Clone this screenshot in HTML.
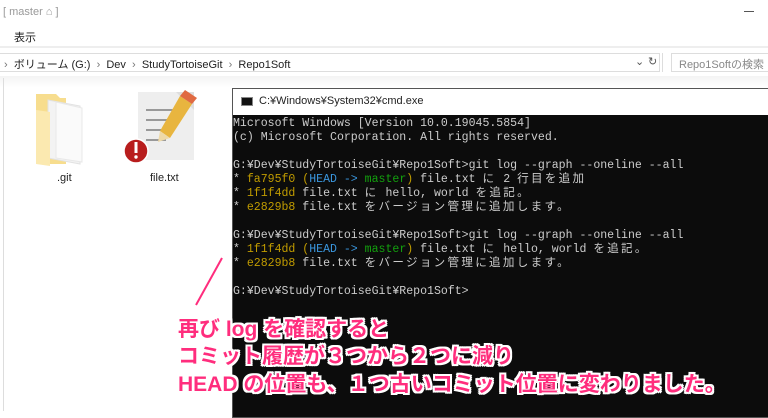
<!DOCTYPE html>
<html><head><meta charset="utf-8"><style>
*{margin:0;padding:0;box-sizing:border-box}
body{width:768px;height:411px;overflow:hidden;background:#fff;position:relative;font-family:"Liberation Sans","Noto Sans CJK JP",sans-serif;}
.abs{position:absolute}
.ui{font-size:11px;color:#222;white-space:nowrap}
#cmd{left:232px;top:88px;width:540px;height:330px;border:1px solid #555;border-right:none;background:#0c0c0c}
#tb{height:26px;background:#fff;position:relative}
#term{position:absolute;left:0;top:28px;font-family:"Liberation Mono","Noto Sans CJK JP",monospace;font-size:11.55px;line-height:14px;color:#ccc;white-space:pre}
.j{letter-spacing:2.3px}
.y{color:#c19c00}.c{color:#3a96dd}.g{color:#13a10e}
.ann{font-family:"Liberation Sans","Noto Sans CJK JP",sans-serif;font-weight:bold;font-size:21px;line-height:24px;color:#ff2d7d;white-space:nowrap;text-shadow:-2px -2px 0 #fff,2px -2px 0 #fff,-2px 2px 0 #fff,2px 2px 0 #fff,0 2px 0 #fff,0 -2px 0 #fff,2px 0 0 #fff,-2px 0 0 #fff}
</style></head><body>
<div class="abs ui" style="left:3px;top:6px;color:#999;font-size:11px">[ master ⌂ ]</div>
<div class="abs" style="left:744px;top:11px;width:10px;height:1px;background:#555"></div>
<div class="abs ui" style="left:14px;top:29px">表示</div>
<div class="abs" style="left:0;top:46px;width:768px;height:2px;background:#eee"></div>
<div class="abs" style="left:0;top:53px;width:660px;height:19px;border:1px solid #ddd;border-left:none"></div>
<div class="abs ui" style="left:4px;top:56px;font-size:11px"><span style="color:#777">›</span>&nbsp; ボリューム (G:) &nbsp;<span style="color:#777">›</span>&nbsp; Dev &nbsp;<span style="color:#777">›</span>&nbsp; StudyTortoiseGit &nbsp;<span style="color:#777">›</span>&nbsp; Repo1Soft</div>
<div class="abs ui" style="left:635px;top:55px;color:#555">⌄</div>
<div class="abs ui" style="left:648px;top:55px;color:#555">↻</div>
<div class="abs" style="left:662px;top:53px;width:1px;height:19px;background:#ddd"></div>
<div class="abs" style="left:671px;top:53px;width:100px;height:19px;border:1px solid #ddd"></div>
<div class="abs ui" style="left:679px;top:56px;color:#888">Repo1Softの検索</div>
<div class="abs" style="left:0;top:76px;width:768px;height:12px;background:linear-gradient(#f3f3f3,#fff)"></div>
<div class="abs" style="left:3px;top:78px;width:1px;height:333px;background:#ddd"></div>
<svg class="abs" style="left:34px;top:92px" width="60" height="76">
<path d="M2 2h20l4 4h6v66H2z" fill="#f7dd8e"/>
<path d="M14 8l32 6v58l-32-6z" fill="#f3f3f3" stroke="#e2e2e2"/>
<path d="M22 10l26 6v54l-26-4z" fill="#fafafa" stroke="#e8e8e8"/>
<path d="M2 18l14 2v54l-14-2z" fill="#fbe9b0"/>
</svg>
<div class="abs ui" style="left:57px;top:172px">.git</div>
<svg class="abs" style="left:122px;top:88px" width="86" height="76">
<rect x="16" y="4" width="56" height="68" fill="#eee"/>
<path d="M16 4l38 0 18 18v-18z" fill="#ddd"/>
<g stroke="#999" stroke-width="2"><line x1="24" y1="22" x2="54" y2="22"/><line x1="24" y1="32" x2="54" y2="32"/><line x1="24" y1="42" x2="50" y2="42"/><line x1="24" y1="52" x2="44" y2="52"/></g>
<path d="M58 8l12 8-22 34-10-7z" fill="#e8b53f"/>
<path d="M58 8l5-6 12 8-5 6z" fill="#e06a42"/>
<path d="M38 43l10 7-12 4z" fill="#eed9a8"/>
<circle cx="14" cy="63" r="12" fill="#b81d1d" stroke="#fff" stroke-width="1.5"/>
<rect x="12.5" y="54" width="3" height="11" fill="#fff"/><circle cx="14" cy="69" r="1.7" fill="#fff"/>
</svg>
<div class="abs ui" style="left:150px;top:172px">file.txt</div>
<div id="cmd" class="abs">
<div id="tb"><div class="abs" style="left:8px;top:8px;width:12px;height:9px;background:#111;border:1px solid #888"></div><div class="abs ui" style="left:26px;top:6px;font-size:11px">C:¥Windows¥System32¥cmd.exe</div></div>
<div id="term">Microsoft Windows [Version 10.0.19045.5854]
(c) Microsoft Corporation. All rights reserved.

G:¥Dev¥StudyTortoiseGit¥Repo1Soft&gt;git log --graph --oneline --all
* <span class="y">fa795f0 (</span><span class="c">HEAD -&gt; </span><span class="g">master</span><span class="y">)</span> file.txt <span class="j">に</span> 2 <span class="j">行目を追加</span>
* <span class="y">1f1f4dd</span> file.txt <span class="j">に</span> hello, world <span class="j">を追記。</span>
* <span class="y">e2829b8</span> file.txt <span class="j">をバージョン管理に追加します。</span>

G:¥Dev¥StudyTortoiseGit¥Repo1Soft&gt;git log --graph --oneline --all
* <span class="y">1f1f4dd (</span><span class="c">HEAD -&gt; </span><span class="g">master</span><span class="y">)</span> file.txt <span class="j">に</span> hello, world <span class="j">を追記。</span>
* <span class="y">e2829b8</span> file.txt <span class="j">をバージョン管理に追加します。</span>

G:¥Dev¥StudyTortoiseGit¥Repo1Soft&gt;</div>
</div>
<svg class="abs" style="left:190px;top:252px" width="40" height="60"><line x1="6" y1="53" x2="32" y2="6" stroke="#fff" stroke-width="4"/><line x1="6" y1="53" x2="32" y2="6" stroke="#ff2d7d" stroke-width="2"/></svg>
<div class="abs ann" style="left:178px;top:318px">再び log を確認すると</div>
<div class="abs ann" style="left:178px;top:345px">コミット履歴が３つから２つに減り</div>
<div class="abs ann" style="left:178px;top:373px">HEAD の位置も、１つ古いコミット位置に変わりました。</div>
</body></html>
